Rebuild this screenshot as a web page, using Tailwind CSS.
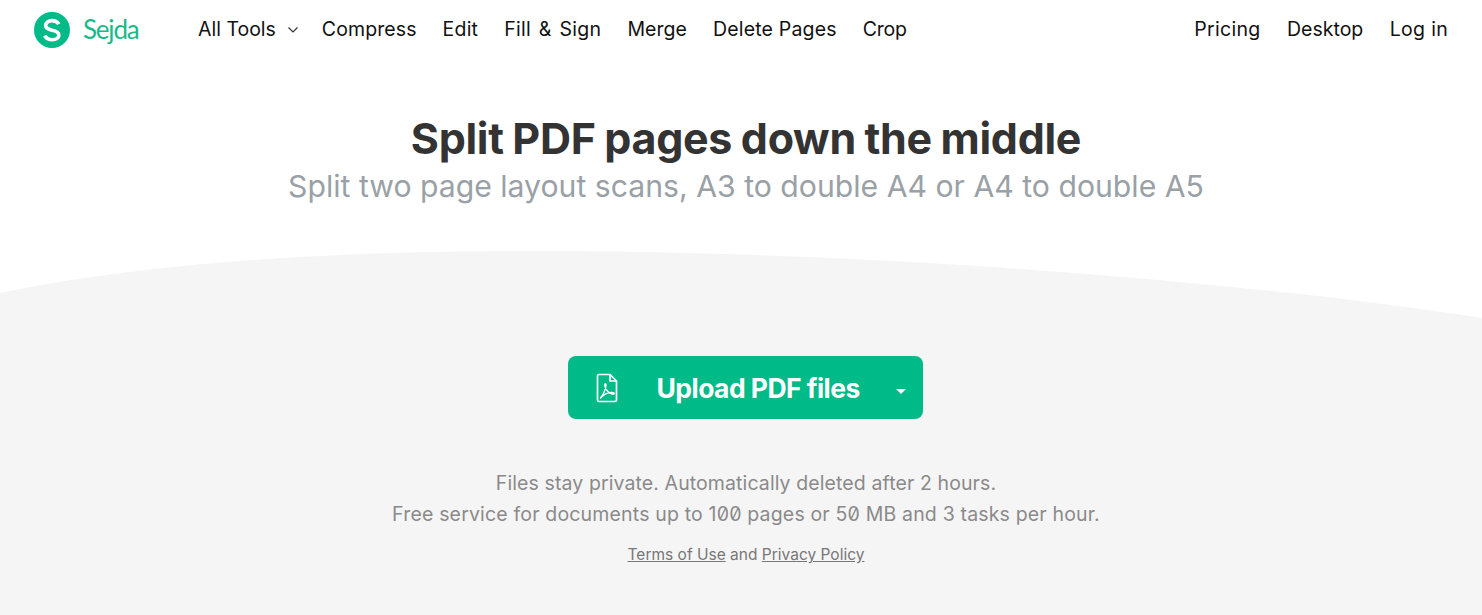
<!DOCTYPE html>
<html><head><meta charset="utf-8"><script src="https://cdn.jsdelivr.net/npm/@tailwindcss/browser@4"></script></head>
<body class="bg-white font-['Inter',sans-serif] overflow-hidden">
<div class="relative w-[1482px] h-[615px] overflow-hidden">
<svg class="absolute left-0 top-0" width="1482" height="615" viewBox="0 0 1482 615"><path d="M0 293C170 258 370 251 540 251C800 251 1180 272 1482 318L1482 615L0 615Z" fill="#f5f5f5"/></svg>
<div class="relative flex flex-col">
<header class="flex items-center h-[59px] pl-[34px] pr-[34px] text-[19.5px] text-[#111111]">
<div class="flex items-center w-[164px]">
<svg width="36" height="36" viewBox="0 0 37 37"><circle cx="18.5" cy="18.5" r="18.5" fill="#00ba88"/><path d="M25.5 12.5C24 9.8 21.5 8.8 18.6 8.8C14.800 8.800 12 10.800 12 14C12 17.200 14.800 18 18.500 18.800C22.500 19.600 25.500 20.500 25.500 23.800C25.500 26.800 22.500 28.500 18.700 28.500C15.300 28.500 12.500 27.200 11 24.300" fill="none" stroke="#fff" stroke-width="3.800"/></svg>
<span class="ml-[13px] text-[26px] tracking-[-1.2px] text-[#1ab98a] font-['Lato',sans-serif]">Sejda</span>
</div>
<nav class="flex items-center gap-[26px]">
<span class="flex items-center">All Tools<svg class="ml-[11px]" width="12" height="8" viewBox="0 0 12 8"><path d="M1.500 1.500L6 6L10.500 1.500" fill="none" stroke="#333" stroke-width="1.200"/></svg></span>
<span class="-ml-[3px] tracking-[0.1px]">Compress</span><span class="tracking-[0.2px]">Edit</span><span class="[word-spacing:2px] tracking-[0.3px]">Fill &amp; Sign</span><span class="tracking-[0.05px]">Merge</span><span class="tracking-[0.17px]">Delete Pages</span><span class="tracking-[-0.2px]">Crop</span>
</nav>
<nav class="ml-auto flex items-center gap-[26.5px]"><span class="tracking-[0.3px]">Pricing</span><span>Desktop</span><span class="tracking-[0.3px]">Log in</span></nav>
</header>
<main class="flex flex-col items-center pl-[10px]">
<h1 class="mt-[51px] text-[43px] leading-[56px] font-bold tracking-[-0.3px] [word-spacing:-1.2px] text-[#333333]">Split PDF pages down the middle</h1>
<p class="text-[30.2px] leading-[40px] text-[#9aa1a6]">Split two page layout scans, A3 to double A4 or A4 to double A5</p>
<button class="-ml-[2px] mt-[150px] w-[355px] h-[63px] rounded-[8px] bg-[#00ba88] text-white flex items-center relative">
<svg class="ml-[28px]" width="22" height="30" viewBox="0 0 22 30" fill="none" stroke="#fff" stroke-width="1.700" stroke-linejoin="round"><path d="M3 1.500H14L20.500 8V27A1.500 1.500 0 0 1 19 28.500H3A1.500 1.500 0 0 1 1.500 27V3A1.500 1.500 0 0 1 3 1.500Z"/><path d="M14 1.500V8H20.500"/><path d="M4.500 25C7 22.500 10 16 10 12C10 10 8.500 10.300 8.800 12.500C9.200 16.500 13 21 17 21.200C19 21.300 18.500 19.500 16 19.500C12.500 19.500 7.500 21.500 4.500 25Z" stroke-width="1.400"/></svg>
<span class="ml-[39px] text-[26.500px] leading-[36px] mt-[1px] font-bold tracking-[-0.55px]">Upload PDF files</span>
<span class="absolute left-[328px] top-[33px] w-0 h-0 border-x-[5px] border-x-transparent border-t-[5px] border-t-white"></span>
</button>
<div class="mt-[49px] text-[19.500px] leading-[31px] text-[#8a8a8a] text-center slashed-zero tracking-[0.1px]">
<p>Files stay private. Automatically deleted after 2 hours.</p>
<p class="tracking-[0.17px]">Free service for documents up to 100 pages or 50 MB and 3 tasks per hour.</p>
</div>
<p class="mt-[13px] text-[15.500px] leading-[24px] text-[#777]"><a class="underline">Terms of Use</a> and <a class="underline">Privacy Policy</a></p>
</main>
</div>
</div>
</body></html>
